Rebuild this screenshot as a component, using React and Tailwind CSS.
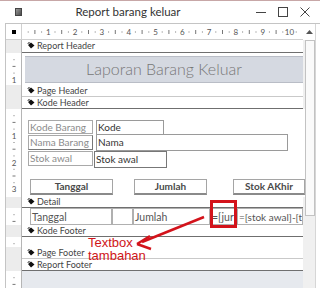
import React from "react";

const U = 26.8;

function HRuler() {
  const items = [];
  for (let n = 0; n <= 10; n++) {
    const x = -0.5 + n * U;
    if (n > 0)
      items.push(
        <text key={"n" + n} x={x} y="11" fontSize="8" textAnchor="middle" fill="#555">
          {n}
        </text>
      );
    for (let q = 1; q <= 3; q++) {
      const xq = x + (q * U) / 4;
      if (xq > 280) continue;
      items.push(
        q === 2 ? (
          <line key={"l" + n + q} x1={xq} x2={xq} y1="6" y2="10" stroke="#777" strokeWidth="1" />
        ) : (
          <rect key={"d" + n + q} x={xq - 0.5} y="7.5" width="1" height="1" fill="#777" />
        )
      );
    }
  }
  return (
    <svg width="281" height="16" className="block">
      {items}
    </svg>
  );
}

function VRuler({ h }) {
  const items = [];
  for (let n = 0; n * U < h; n++) {
    const y = n * U;
    if (n > 0)
      items.push(
        <text key={"n" + n} x="8" y={y + 3} fontSize="8" textAnchor="middle" fill="#555">
          {n}
        </text>
      );
    for (let q = 1; q <= 3; q++) {
      const yq = y + (q * U) / 4;
      if (yq > h - 1) continue;
      items.push(
        q === 2 ? (
          <line key={"l" + n + q} x1="6.5" x2="9.5" y1={yq} y2={yq} stroke="#777" />
        ) : (
          <rect key={"d" + n + q} x="7.5" y={yq - 0.5} width="1" height="1" fill="#777" />
        )
      );
    }
  }
  return (
    <svg width="15" height={h} className="block">
      {items}
    </svg>
  );
}

function SectionIcon() {
  return (
    <svg width="8" height="7" viewBox="0 0 8 7" className="shrink-0">
      <path d="M1 3 L4 0.5 L7.5 3.5 L4 6.5 Z M0 2 L2 0 L3 1 Z" fill="#111" />
    </svg>
  );
}

function Bar({ label, h = "h-[12px]", line = "border-b-[#6f6f6f]" }) {
  return (
    <div className={`flex ${h}`}>
      <div className="w-[16px] shrink-0 bg-[#ececec] border-r border-[#b5b5b5]" />
      <div className={`flex-1 flex items-center gap-[2px] pl-[5px] border-b ${line} bg-white`}>
        <SectionIcon />
        <span className="text-[9px] leading-none text-[#444]">{label}</span>
      </div>
    </div>
  );
}

function Body({ h, children, className = "" }) {
  return (
    <div className="flex" style={{ height: h }}>
      <div className="w-[16px] shrink-0 bg-white border-r border-[#b5b5b5]">
        <VRuler h={h} />
      </div>
      <div className={`flex-1 relative bg-white ${className}`}>{children}</div>
    </div>
  );
}

const label =
  "border border-[#a9a9a9] text-[10px] leading-none text-[#8c8c8c] pl-[1px] flex items-center";
const box =
  "border border-[#9a9a9a] text-[10px] leading-none text-[#333] pl-[1px] flex items-center";
const head =
  "border border-[#a5a5a5] border-b-2 border-b-[#8a8a8a] text-[10px] font-bold text-[#4a4a4a] flex items-center justify-center";
const cell = "border border-[#b0b0b0] text-[10.5px] leading-none text-[#555] pl-[1px] flex items-center overflow-hidden whitespace-nowrap";

export default function App() {
  return (
    <div className="relative w-[320px] h-[288px] bg-white overflow-hidden font-[Lato,sans-serif]">
      {/* title bar */}
      <div className="h-[23px] border-t border-[#c7a7a7] flex items-center relative">
        <div className="ml-[15px] w-[7px] h-[8px] bg-gradient-to-br from-[#9a9a9a] to-[#4d4d4d] border border-[#444]" />
        <div className="flex-1 text-center text-[11.5px] text-[#333] -ml-[22px]">Report barang keluar</div>
        <div className="flex items-center gap-[12px] mr-[10px]">
          <svg width="10" height="10" viewBox="0 0 10 10">
            <line x1="0" y1="5.5" x2="10" y2="5.5" stroke="#444" />
          </svg>
          <svg width="10" height="10" viewBox="0 0 10 10">
            <rect x="0.5" y="0.5" width="9" height="9" fill="none" stroke="#444" />
          </svg>
          <svg width="10" height="10" viewBox="0 0 10 10">
            <path d="M0.5 0.5 L9.5 9.5 M9.5 0.5 L0.5 9.5" stroke="#444" />
          </svg>
        </div>
      </div>

      <div className="flex ml-[5px] h-[265px] border-l border-t border-[#c4c4c4]">
        <div className="w-[297px] flex flex-col">
          {/* ruler row */}
          <div className="flex h-[16px] border-b border-[#d0d0d0]">
            <div className="w-[16px] shrink-0 flex items-center justify-center border-r border-[#d0d0d0]">
              <div className="w-[4px] h-[4px] bg-black" />
            </div>
            <HRuler />
          </div>

          <Bar label="Report Header" h="h-[13px]" />
          <Body h={32}>
            <div className="mt-[3px] ml-[3px] h-[27px] bg-[#d5d9e1] border-y border-[#b9bdc6] flex items-center justify-center text-[16px] font-light text-[#777]">
              Laporan Barang Keluar
            </div>
          </Body>
          <Bar label="Page Header" line="border-b-[#c9c9c9]" />
          <Bar label="Kode Header" />
          <Body h={88}>
            <div className="pt-[11px] pl-[6px] flex flex-col">
              <div className="flex h-[16px] items-start">
                <div className={`${label} w-[65px] h-[14px]`}>Kode Barang</div>
                <div className={`${box} ml-[3px] w-[68px] h-[15px]`}>Kode</div>
              </div>
              <div className="flex h-[16px] items-start -mt-[1px]">
                <div className={`${label} w-[65px] h-[15px] border-r-[#777] border-b-[#777]`}>Nama Barang</div>
                <div className={`${box} ml-[3px] w-[192px] h-[17px] -mt-[1px]`}>Nama</div>
              </div>
              <div className="flex h-[17px] items-start">
                <div className={`${label} w-[65px] h-[15px]`}>Stok awal</div>
                <div className={`${box} ml-[1px] w-[73px] h-[17px] border-[#777]`}>Stok awal</div>
              </div>
            </div>
            <div className="flex mt-[11px] h-[16px] pl-[8px]">
              <div className={`${head} w-[83px]`}>Tanggal</div>
              <div className={`${head} w-[73px] ml-[21px]`}>Jumlah</div>
              <div className={`${head} w-[72px] ml-[26px]`}>Stok AKhir</div>
            </div>
          </Body>
          <Bar label="Detail" />
          <Body h={17}>
            <div className="flex h-[17px] pl-[8px]">
              <div className={`${cell} w-[82px]`}>Tanggal</div>
              <div className={`${cell} w-[21px]`} />
              <div className={`${cell} w-[77px]`}>Jumlah</div>
              <div className={`${cell} w-[27px]`}>=[jur</div>
              <div className={`${cell} w-[66px] text-[10px]`}>=[stok awal]-[te</div>
            </div>
          </Body>
          <Bar label="Kode Footer" />
          <Body h={10} />
          <Bar label="Page Footer" line="border-b-[#c9c9c9]" />
          <Bar label="Report Footer" />
          <div className="flex h-[17px]">
            <div className="w-[16px] shrink-0 bg-white border-r border-[#b5b5b5]">
              <VRuler h={17} />
            </div>
            <div className="flex-1 bg-[#e6e9ee]" />
          </div>
        </div>

        {/* scrollbar */}
        <div className="w-[13px] flex flex-col bg-[#f0f0f0] border-r border-[#d6d6d6]">
          <div className="h-[16px] bg-white flex items-center justify-center">
            <svg width="7" height="4" viewBox="0 0 7 4">
              <path d="M0 4 L3.5 0 L7 4 Z" fill="#555" />
            </svg>
          </div>
          <div className="ml-[2px] w-[10px] h-[176px] bg-[#fafafa] border border-[#c2c2c2]" />
        </div>
      </div>

      {/* annotation */}
      <div className="absolute left-[210px] top-[200px] w-[27px] h-[28px] border-[3px] border-[#d3131b]" />
      <svg className="absolute left-0 top-0" width="320" height="288">
        <line x1="204" y1="217" x2="142" y2="242" stroke="#d3131b" strokeWidth="2.5" />
        <path d="M137 244 L150 236 M137 244 L151 249" stroke="#d3131b" strokeWidth="2.5" fill="none" />
      </svg>
      <div className="absolute left-[88px] top-[236px] text-[13px] leading-[13px] text-[#cf1418] font-['Liberation_Sans',Arial,sans-serif]">
        Textbox
        <br />
        tambahan
      </div>
    </div>
  );
}
